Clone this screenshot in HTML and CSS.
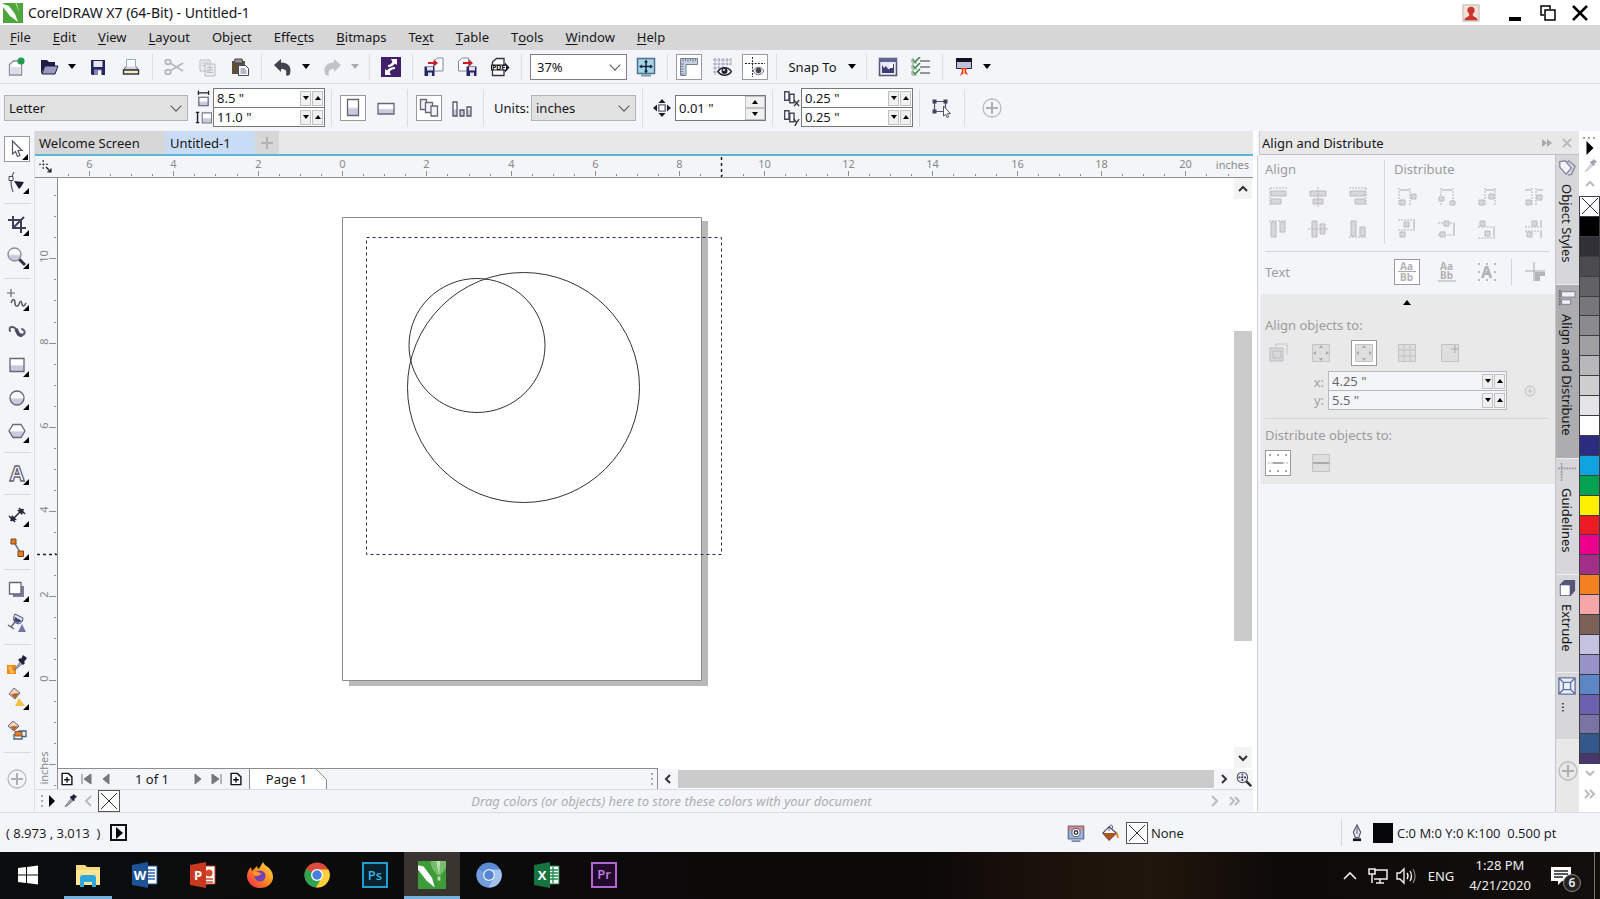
FILE: index.html
```html
<!DOCTYPE html>
<html lang="en">
<head>
<meta charset="utf-8">
<title>CorelDRAW X7 (64-Bit) - Untitled-1</title>
<link rel="stylesheet" href="styles.css">
</head>
<body>
<svg class="paints" aria-hidden="true">
<defs>
<linearGradient id="lav" x1="0" y1="0" x2="0" y2="1"><stop offset=".45" stop-color="#fff"/><stop offset=".6" stop-color="#c9cadd"/></linearGradient>
<linearGradient id="ff" x1="1" y1="0" x2="0" y2="1"><stop offset="0" stop-color="#ffe14a"/><stop offset=".5" stop-color="#ff8a1e"/><stop offset="1" stop-color="#f0204f"/></linearGradient>
</defs>
</svg>
<svg class="sprite" aria-hidden="true">
<symbol id="new" viewBox="0 0 20 20"><path d="M3.500 7.500l4-3.500h8v14h-12z" fill="#fff" stroke="#8b8b9c" stroke-width="1.300"/><path d="M5 10h9v7H5z" fill="#dcdce8"/><circle cx="15" cy="4" r="3.600" fill="#1f9b4b"/></symbol>
<symbol id="open" viewBox="0 0 20 20"><path d="M2 3h6l2 2h6v4H6l-4 8z" fill="#1d1d46"/><path d="M6 9h13l-3 8H3z" fill="#9b9cbd" stroke="#1d1d46"/></symbol>
<symbol id="save" viewBox="0 0 20 20"><path d="M3 3h14v15H4l-1-1z" fill="#26265e"/><path d="M5.500 4h9v6h-9z" fill="#e6e6f0"/><path d="M6 12.500h8V18H6z" fill="#8586ad"/><path d="M10 13.500h3V18h-3z" fill="#fff"/></symbol>
<symbol id="print" viewBox="0 0 20 20"><path d="M5.500 2.500h9V12h-9z" fill="#fff" stroke="#8bb4b4"/><path d="M5 9.500L2.500 13h15L15 9.500" fill="#d5d5df" stroke="#555566"/><path d="M2.500 13h15v4h-15z" fill="#f4f0b5" stroke="#33334a" stroke-width="1.400"/></symbol>
<symbol id="cut" viewBox="0 0 20 20"><g fill="none" stroke="#b9bac0" stroke-width="2"><path d="M6 6l13 8M6 14l13-8"/><ellipse cx="4" cy="5" rx="2.700" ry="2.200"/><ellipse cx="4" cy="15" rx="2.700" ry="2.200"/></g></symbol>
<symbol id="copy" viewBox="0 0 20 20"><path d="M3 3h10v11H3zM8 7h10v12H8z" fill="#ececf0" stroke="#bcbdc3"/><path d="M5 6h6M5 8.500h3M10 10.500h6M10 13h6M10 15.500h6" stroke="#bcbdc3"/></symbol>
<symbol id="paste" viewBox="0 0 20 20"><path d="M2 4h13v13H2z" fill="#5c5137"/><path d="M5 2h7l1 4H4z" fill="#92918f" stroke="#44424c"/><path d="M8.500 8.500h7l3 3v7h-10z" fill="#fff" stroke="#44446b"/><path d="M10.500 12h5M10.500 14h6M10.500 16h6" stroke="#6c6c92"/></symbol>
<symbol id="undo" viewBox="0 0 20 20"><path d="M1 8l7-6v3.500c7 0 11 4 9 11.500-1 2-3 2-4 1 1-4 0-6-5-6V15z" fill="#43434f"/></symbol>
<symbol id="redo" viewBox="0 0 20 20"><path d="M19 8l-7-6v3.500c-7 0-11 4-9 11.500 1 2 3 2 4 1-1-4 0-6 5-6V15z" fill="#c2c3c9"/></symbol>
<symbol id="connect" viewBox="0 0 20 20"><path d="M0 0h20v20H0z" fill="#412069"/><path d="M10 2h6v6l-2-1.500c-1.500 2-4 3.500-7 3.500V8c2 0 3.500-1.500 4.500-3z" fill="#fff"/><path d="M10 18H4v-6l2 1.500c1.500-2 4-3.500 8-3.500v2c-3 0-4.500 1.500-5.500 3z" fill="#fff"/></symbol>
<symbol id="import" viewBox="0 0 20 20"><path d="M9.500 4l4-3h5.500v13h-9.500z" fill="#fff" stroke="#8585a0"/><path d="M0.500 9.500h10v9.500h-10z" fill="#26265e"/><path d="M3 10h6v3.500H3zM4 15.500h4V19H4z" fill="#dfe0f0"/><path d="M4 5h6V2.500l4 3.500-4 3.500V7H4z" fill="#cc1f26"/></symbol>
<symbol id="export" viewBox="0 0 20 20"><path d="M1.500 4l4-3h6v13h-10z" fill="#fff" stroke="#8585a0"/><path d="M9.500 9.500h10v9.500h-10z" fill="#26265e"/><path d="M12 10h6v3.500h-6zM13 15.500h4V19h-4z" fill="#dfe0f0"/><path d="M6 5h6V2.500l4 3.500-4 3.500V7H6z" fill="#cc1f26"/></symbol>
<symbol id="pdf" viewBox="0 0 20 20"><path d="M2.500 18.500V5l4-3.500H14v17z" fill="#fff" stroke="#33333d" stroke-width="1.300"/><path d="M1 7.500h14v-2l4.500 5-4.500 5v-2H1z" fill="#16161e"/><path d="M2 8.500h14v4H2z" fill="#fff"/><text x="2" y="13" font-size="7" font-weight="700" fill="#000">PDF</text></symbol>
<symbol id="fulls" viewBox="0 0 20 20"><path d="M1.500 1.500h17v15h-17z" fill="#a6d5e8" stroke="#4d7187" stroke-width="1.500"/><path d="M5 18.500h10" stroke="#7899a9" stroke-width="2"/><path d="M10 4v11M4.500 9.500h11" stroke="#12233a" stroke-width="1.500"/><path d="M10 2.500l2 3H8zM10 16.500l2-3H8zM3 9.500l3-2v4zM17 9.500l-3-2v4z" fill="#12233a"/></symbol>
<symbol id="rulers" viewBox="0 0 20 20"><path d="M1.500 1.500h17v6H7v11H1.500z" fill="#c7cfdd" stroke="#73819c"/><path d="M4 2v3M6.500 2v2M9 2v3M11.500 2v2M14 2v3M16.500 2v2M2 7h3M2 9.500h2M2 12h3M2 14.500h2M2 17h3" stroke="#5f6f8d" stroke-width=".8"/></symbol>
<symbol id="grid" viewBox="0 0 20 20"><path d="M1 3h18M1 7h18M1 11h9M1 15h6M3 1v17M7 1v16M11 1v9M15 1v8M19 1v8" stroke="#9495b4" stroke-dasharray="2 .6"/><path d="M6 14.500c3-5 10-5 13.500 0-3.500 5-10.500 5-13.500 0z" fill="#fff" stroke="#222234" stroke-width="1.500"/><circle cx="12.500" cy="14" r="3" fill="#222234"/><circle cx="12" cy="13" r="1" fill="#fff"/></symbol>
<symbol id="guides" viewBox="0 0 20 20"><path d="M7.500 0v20M0 6.500h20" stroke="#222" stroke-dasharray="2 1.200"/><path d="M8 14c3-5 8-5 11 0-3 5-8 5-11 0z" fill="#e4e4ea" stroke="#777784"/><circle cx="13.500" cy="13.500" r="2.700" fill="#454552"/></symbol>
<symbol id="options" viewBox="0 0 20 20"><path d="M1.500 1.500h17v17h-17z" fill="#e9eaf5" stroke="#555673" stroke-width="1.500"/><path d="M1 1h18v4H1z" fill="#63648d"/><path d="M4 8v8h12V7h-4v5h-2l-2-3-2 2z" fill="#3f3e78"/><path d="M12 7h3v4h-3z" fill="#fff"/></symbol>
<symbol id="checks" viewBox="0 0 20 20"><path d="M9 4h10M9 10h10M9 16h10" stroke="#77777f" stroke-width="1.500"/><path d="M3 2H1v4h5M3 8H1v4h5M3 14H1v4h5" fill="none" stroke="#8b978b"/><path d="M2 3l2 2 5-5M2 9l2 2 5-5M2 15l2 2 5-5" fill="none" stroke="#30883a" stroke-width="1.500"/></symbol>
<symbol id="launch" viewBox="0 0 20 20"><path d="M2.500 1.500h15v10h-15z" fill="#bfc1dc" stroke="#222238"/><path d="M2 1h16v4H2z" fill="#111122"/><path d="M7 11h6l-1 3 2 4-4-2-4 3 2-5z" fill="#e8342a"/><path d="M9 12h2v4H9z" fill="#ffb84d"/></symbol>
<symbol id="pw" viewBox="0 0 20 20"><path d="M4.500 8.500h11v10h-11z" fill="url(#lav)" stroke="#55556d" stroke-width="1.300"/><path d="M4 1v5M16 1v5M4 3.500h12" stroke="#222" stroke-width="1.500"/></symbol>
<symbol id="ph" viewBox="0 0 20 20"><path d="M8.500 4.500h11v12h-11z" fill="url(#lav)" stroke="#77778f" stroke-width="1.300"/><path d="M3 4v12M1 4h4M1 16h4" stroke="#222" stroke-width="1.700"/></symbol>
<symbol id="portrait" viewBox="0 0 20 20"><path d="M4.500 1.500h11v16h-11z" fill="url(#lav)" stroke="#666675" stroke-width="1.300"/></symbol>
<symbol id="landscape" viewBox="0 0 20 20"><path d="M2 5.500h16v10.500H2z" fill="url(#lav)" stroke="#666675" stroke-width="1.300"/></symbol>
<symbol id="pages" viewBox="0 0 20 20"><g fill="#f3f3f8" stroke="#666675" stroke-width="1.300"><path d="M1.500 1.500h6v10h-6z"/><path d="M6.500 4.500h7v10h-7z"/><path d="M12 8h6.500v10H12z"/></g></symbol>
<symbol id="bars" viewBox="0 0 20 20"><g fill="url(#lav)" stroke="#555566" stroke-width="1.300"><path d="M1 4h4v14H1zM8 12h4v6H8zM15 9h4v9h-4z"/></g></symbol>
<symbol id="nudge" viewBox="0 0 20 20"><path d="M6.500 6.500h7v7h-7z" fill="#fff" stroke="#66667a" stroke-width="1.500"/><path d="M10 0l4 4.500H6zM10 20l4-4.500H6zM0 10l4.500-4v8zM20 10l-4.500-4v8z" fill="#1b1b2a"/></symbol>
<symbol id="dupx" viewBox="0 0 20 20"><path d="M2 2h5v10H2zM8 5h5v10H8z" fill="#fff" stroke="#44445a" stroke-width="1.600"/><path d="M13 12l6 7M19 12l-6 7" stroke="#333" stroke-width="1.600"/></symbol>
<symbol id="dupy" viewBox="0 0 20 20"><path d="M2 2h5v10H2zM8 5h5v10H8z" fill="#fff" stroke="#44445a" stroke-width="1.600"/><path d="M13 12l3 4 3-4M16 16l-2 4" stroke="#333" stroke-width="1.600" fill="none"/></symbol>
<symbol id="treat" viewBox="0 0 20 20"><path d="M3.500 3.500h11v10h-11z" fill="#eeeef6" stroke="#555670" stroke-width="1.200"/><path d="M1.500 1.500h4v4h-4zM12.500 1.500h4v4h-4zM1.500 11.500h4v4h-4z" fill="#44445a"/><path d="M12.500 8v10l2.200-1.700 1.300 3.200 1.700-.700-1.300-3.200h3z" fill="#fff" stroke="#555"/></symbol>
<symbol id="plus" viewBox="0 0 20 20"><circle cx="10" cy="10" r="9" fill="none" stroke="#b9babd" stroke-width="1.300"/><path d="M10 4v12M4 10h12" stroke="#aeafb2" stroke-width="2"/></symbol>
<symbol id="pick" viewBox="0 0 20 20"><path d="M5.500 2v13l3-2.500 2 5 2.500-1-2-5h4z" fill="#fff" stroke="#55556d" stroke-width="1.200"/></symbol>
<symbol id="shape" viewBox="0 0 20 20"><path d="M7 0C3 6 3 12 6 20" fill="none" stroke="#66667a" stroke-width="1.300"/><path d="M2 4.500h4v4H2z" fill="#fff" stroke="#44445a"/><path d="M7 9l10 1-3 5-2 2z" fill="#1c1c35"/></symbol>
<symbol id="crop" viewBox="0 0 20 20"><path d="M6 2v12h13M1 6h13v13M6 14L17 3" fill="none" stroke="#3f3e5b" stroke-width="2"/></symbol>
<symbol id="zoom" viewBox="0 0 20 20"><path d="M12 12l6 6" stroke="#333346" stroke-width="3"/><circle cx="7.500" cy="7.500" r="6.500" fill="url(#lav)" stroke="#8a8a9b" stroke-width="1.300"/></symbol>
<symbol id="free" viewBox="0 0 20 20"><path d="M4 0v8M0 4h8" stroke="#666675" stroke-width="1.200"/><path d="M4 14c2-5 4-4 4 0s3 4 4 1 2-4 3 0 3 1 4-1" fill="none" stroke="#555567" stroke-width="1.500"/></symbol>
<symbol id="art" viewBox="0 0 20 20"><path d="M3 9C1 4 7 4 9 7s2 7 6 6 3-5 0-6" fill="none" stroke="#5a596c" stroke-width="2" stroke-linecap="round"/><path d="M9 7c2 4 2 7 6 6" fill="none" stroke="#4b4a61" stroke-width="3.500"/></symbol>
<symbol id="rect" viewBox="0 0 20 20"><path d="M3 3.500h14v13H3z" fill="url(#lav)" stroke="#66667a" stroke-width="1.300"/></symbol>
<symbol id="ell" viewBox="0 0 20 20"><circle cx="10" cy="10" r="7" fill="url(#lav)" stroke="#66667a" stroke-width="1.300"/></symbol>
<symbol id="poly" viewBox="0 0 20 20"><path d="M6 3.500h8l4 6.500-4 6.500H6L2 10z" fill="url(#lav)" stroke="#66667a" stroke-width="1.300"/></symbol>
<symbol id="texta" viewBox="0 0 20 20"><text x="10" y="17.500" text-anchor="middle" font-size="21" font-weight="700" fill="#fff" stroke="#66667a" stroke-width="1.300">A</text></symbol>
<symbol id="dim" viewBox="0 0 20 20"><path d="M4 16L16 4M2 11l6 6M12 3l6 6" stroke="#27273c" stroke-width="1.500"/><path d="M3 16l2-6 5 5zM17 4l-2 6-5-5z" fill="#27273c"/></symbol>
<symbol id="conn" viewBox="0 0 20 20"><path d="M7 4l7 12" stroke="#77778a" stroke-width="1.500"/><path d="M4 1h5v5H4zM11 13h5.500v5.500H11z" fill="#e27d22" stroke="#80451a"/></symbol>
<symbol id="shadow" viewBox="0 0 20 20"><path d="M6 6h11v11H6z" fill="#7d7e9f"/><path d="M2.500 2.500h11.500v11.500H2.500z" fill="#fff" stroke="#66667a" stroke-width="1.300"/></symbol>
<symbol id="glass" viewBox="0 0 20 20"><path d="M8 1l8 4c0 5-4 7-7 5s-3-5-1-9z" fill="#dbe5f2" stroke="#4a4b6a"/><path d="M8 4l7 4-4 2-4-2z" fill="#404375"/><path d="M8 9l-4 5M1 12l6 4" stroke="#66667a" stroke-width="1.500"/><path d="M15 11l4 8h-8z" fill="#7375a2"/></symbol>
<symbol id="drop" viewBox="0 0 20 20"><path d="M13 5L5 15l-2 3 4-2 9-8z" fill="#a4adba" stroke="#556"/><path d="M15 0l5 4-4 3 1 2-2 1-5-5 1-2 2 0z" fill="#20203c"/></symbol>
<symbol id="cdrop" viewBox="0 0 20 20"><path d="M0 10h9v9H0z" fill="#f08a1e"/><path d="M1 12l3-1 1 4 3 2-4 2z" fill="#ffc04a"/><path d="M14 6l-7 9 1 0 8-7z" fill="#a4adba" stroke="#778"/><path d="M16 0l4 3-3 4 1 1-2 2-5-5 2-2 1 1z" fill="#20203c"/></symbol>
<symbol id="ifill" viewBox="0 0 20 20"><path d="M7 0l6 5-5 6-6-5z" fill="#f1d5bd" stroke="#66667a"/><path d="M4 6l8-1-4 5.500z" fill="#b0622c"/><path d="M12 10l6 8H8z" fill="#f2c14a"/></symbol>
<symbol id="sfill" viewBox="0 0 20 20"><path d="M6 0l6 5-5 5-6-5z" fill="#f1d5bd" stroke="#66667a"/><path d="M3 5.500l8-.5-4 4.500z" fill="#b0622c"/><path d="M8 10.500h7V15H8z" fill="#e27d22" stroke="#8b5a38"/><path d="M11.500 10h7.500v5.500h-4V18H7v-5" fill="none" stroke="#44627e" stroke-width="1.300"/></symbol>
<symbol id="origin" viewBox="0 0 20 20"><path d="M6 0v14M0 6h14" stroke="#222" stroke-width="1.600" stroke-dasharray="3 2"/><path d="M10 10l7 7M17 12v5h-5" fill="none" stroke="#222" stroke-width="2"/></symbol>
<symbol id="addpage" viewBox="0 0 20 20"><path d="M3 2h9l5 5v11H3z" fill="#fff" stroke="#111" stroke-width="2"/><path d="M10 7v8M6 11h8" stroke="#111" stroke-width="2"/></symbol>
<symbol id="target" viewBox="0 0 20 20"><path d="M12 12l7 7" stroke="#333" stroke-width="3"/><circle cx="8" cy="8" r="6.500" fill="#eceef8" stroke="#55556d" stroke-width="1.400"/><path d="M8 3v10M3 8h10" stroke="#44445a" stroke-width="2" stroke-dasharray="2.500 1"/></symbol>
<symbol id="none" viewBox="0 0 20 20"><path d="M0 0h20v20H0z" fill="#fff"/><path d="M2 2l16 16M18 2L2 18" stroke="#333" stroke-width="1"/></symbol>
<symbol id="proof" viewBox="0 0 20 20"><path d="M1.500 2.500h17v14h-17z" fill="#8fb8d8" stroke="#766f8c" stroke-width="1.500"/><path d="M2 3h16v4H2z" fill="#d98888"/><path d="M5 19h10" stroke="#7d86b5" stroke-width="2"/><circle cx="10" cy="9.500" r="4.500" fill="#fff" stroke="#556"/><circle cx="10" cy="9.500" r="2" fill="none" stroke="#334" stroke-width="1.500"/></symbol>
<symbol id="bucket" viewBox="0 0 20 20"><path d="M9 3l8 7-8 8-7-8z" fill="#fff" stroke="#444466" stroke-width="1.300"/><path d="M2 10h15l-8 8z" fill="#b0551a"/><path d="M9 8c-1-8 4-9 4-3" fill="none" stroke="#446"/><path d="M17 8c3 3 3 8 2 8s-3-3-2-8z" fill="#e88a2c"/></symbol>
<symbol id="pen" viewBox="0 0 20 20"><path d="M10 1l4 8-2 6H8L6 9z" fill="#e5e5ee" stroke="#55556d" stroke-width="1.300"/><path d="M10 4v7" stroke="#445"/><path d="M5.500 16h9v3h-9z" fill="#111122"/></symbol>
<symbol id="user" viewBox="0 0 20 20"><path d="M1 1h18v18H1z" fill="#f4ded8" stroke="#b5b0ae"/><circle cx="10" cy="7" r="4" fill="#c8352a"/><path d="M8 9h4v4l5 3v2H3v-2l5-3z" fill="#c8352a"/></symbol>
<symbol id="corel" viewBox="0 0 20 20"><path d="M0 0h20v20H0z" fill="#4fa63c"/><path d="M0 1l6 2 6 8 3 8-8-6-7-9z" fill="#fff"/><path d="M12 0h2l2 9zM18 2l-1 8" fill="#a6d898"/></symbol>
<symbol id="corelb" viewBox="0 0 20 20"><path d="M0 0h20v20H0z" fill="#3e9b3a"/><path d="M9 0h11c1 5-2 8-4 10h-2C12 8 9 5 9 0z" fill="#77bd6c"/><path d="M13 0h3l-1 10z" fill="#b9dfb1"/><path d="M14 11h2v3h-2z" fill="#b9dfb1"/><path d="M0 3l4 1 6 8 2 7-6-5-6-8z" fill="#fff"/></symbol>
<!-- disabled docker icons -->
<symbol id="al" viewBox="0 0 20 20"><path d="M2 1v18M2 1h17" class="dd"/><path d="M3 4h15v5H3zM3 12h10v5H3z" class="df"/></symbol>
<symbol id="ac" viewBox="0 0 20 20"><path d="M2 4h16v5H2zM5 12h10v5H5z" class="df"/><path d="M10 0v20" class="dd"/></symbol>
<symbol id="ar" viewBox="0 0 20 20"><path d="M18 1v18M1 1h17" class="dd"/><path d="M2 4h15v5H2zM7 12h10v5H7z" class="df"/></symbol>
<symbol id="at" viewBox="0 0 20 20"><path d="M1 2h18" class="dd"/><path d="M3 3h5v15H3zM12 3h5v10h-5z" class="df"/></symbol>
<symbol id="am" viewBox="0 0 20 20"><path d="M4 2h5v16H4zM12 5h5v10h-5z" class="df"/><path d="M0 10h20" class="dd"/></symbol>
<symbol id="ab" viewBox="0 0 20 20"><path d="M1 18h18" class="dd"/><path d="M3 2h5v15H3zM12 8h5v9h-5z" class="df"/></symbol>
<symbol id="dh1" viewBox="0 0 20 20"><path d="M2 1v18M13 1v18" class="dd"/><path d="M3 3h9" class="ds"/><path d="M3 13h5v5H3zM14 7h5v5h-5z" class="df"/></symbol>
<symbol id="dh2" viewBox="0 0 20 20"><path d="M4 1v18M16 1v18" class="dd"/><path d="M5 3h10" class="ds"/><path d="M2 10h5v4H2zM13 14h5v4h-5z" class="df"/></symbol>
<symbol id="dh3" viewBox="0 0 20 20"><path d="M8 1v18M18 1v18" class="dd"/><path d="M9 3h9" class="ds"/><path d="M2 13h5v5H2zM12 7h5v5h-5z" class="df"/></symbol>
<symbol id="dh4" viewBox="0 0 20 20"><path d="M8 1v18M12 1v18" class="dd"/><path d="M1 3h6M13 3h6" class="ds"/><path d="M2 13h5v5H2zM13 8h5v5h-5z" class="df"/></symbol>
<symbol id="dv1" viewBox="0 0 20 20"><path d="M1 1h18M1 11h18" class="dd"/><path d="M17 2v8" class="ds"/><path d="M7 3h5v5H7zM3 13h5v5H3z" class="df"/></symbol>
<symbol id="dv2" viewBox="0 0 20 20"><path d="M1 4h18M1 16h18" class="dd"/><path d="M17 5v10" class="ds"/><path d="M7 2h5v5H7zM3 13h5v5H3z" class="df"/></symbol>
<symbol id="dv3" viewBox="0 0 20 20"><path d="M1 8h18M1 19h18" class="dd"/><path d="M17 9v9" class="ds"/><path d="M3 2h5v5H3zM8 12h5v5H8z" class="df"/></symbol>
<symbol id="dv4" viewBox="0 0 20 20"><path d="M1 8h18M1 12h18" class="dd"/><path d="M17 1v6M17 13v6" class="ds"/><path d="M8 2h5v5H8zM3 13h5v5H3z" class="df"/></symbol>
<symbol id="tb1" viewBox="0 0 20 20"><path d="M1 9.500h18" class="ds"/><text x="3" y="8" class="dt">Aa</text><text x="3" y="19" class="dt">Bb</text></symbol>
<symbol id="tb2" viewBox="0 0 20 20"><path d="M1 19h18" class="ds"/><text x="3" y="8" class="dt">Aa</text><text x="3" y="17" class="dt">Bb</text></symbol>
<symbol id="tb3" viewBox="0 0 20 20"><path d="M1 2h18M1 10h18M1 18h18" stroke="#bbb" stroke-width="2" stroke-dasharray="2 6"/><text x="4" y="16" class="dt2">A</text></symbol>
<symbol id="tb4" viewBox="0 0 20 20"><path d="M9 0v19M0 9h20" class="ds"/><path d="M10 10h10v4h-5v5h-5z" fill="#b5b5b8"/></symbol>
<symbol id="o1" viewBox="0 0 20 20"><path d="M2 5h13v13H2zM5 8h8v7H5z" class="df"/><path d="M8 1h11v11M8 1v4" class="dd"/></symbol>
<symbol id="o2" viewBox="0 0 20 20"><path d="M1.500 1.500h17v17h-17z" class="df2"/><path d="M10 2l2 3H8zM10 18l2-3H8zM2 10l3-2v4zM18 10l-3-2v4z" fill="#aaa"/></symbol>
<symbol id="o4" viewBox="0 0 20 20"><path d="M1.500 1.500h17v17h-17zM7 2v16M13 2v16M2 7h16M2 13h16" class="df2"/></symbol>
<symbol id="o5" viewBox="0 0 20 20"><path d="M1.500 1.500h17v17h-17z" class="df2"/><path d="M15 2v8M11 6h8" class="ds"/></symbol>
<symbol id="o6" viewBox="0 0 20 20"><path d="M1 2h18M1 18h18" stroke="#aaa" stroke-width="2" stroke-dasharray="2 6"/><path d="M0 10h20" class="dd"/><path d="M5 10h10" stroke="#aaa" stroke-width="2"/></symbol>
<symbol id="o7" viewBox="0 0 20 20"><path d="M1.500 1.500h17v17h-17z" class="df2"/><path d="M2 10h16" stroke="#aaa" stroke-width="2"/></symbol>
<symbol id="gear" viewBox="0 0 20 20"><circle cx="10" cy="10" r="8" fill="none" stroke="#c5c5c8" stroke-width="2"/><path d="M10 5v10M6 10h8" class="ds"/></symbol>
<symbol id="tagi" viewBox="0 0 20 20"><path d="M9 5l3-3 7 6-4 9-4 1" fill="#d8d9e2" stroke="#8787a0" stroke-width="1.500"/><path d="M2 3l6-1 7 8-6 7-7-8z" fill="#f4f4f8" stroke="#8787a0" stroke-width="1.500"/></symbol>
<symbol id="tali" viewBox="0 0 20 20"><path d="M2 1v18" stroke="#66667a" stroke-width="2" stroke-dasharray="2 1"/><path d="M4 3h15v6H4zM4 12h10v5H4z" fill="#f1f1f6" stroke="#77778c"/></symbol>
<symbol id="tgui" viewBox="0 0 20 20"><path d="M4 0v20M0 6h20" stroke="#9999a8" stroke-width="2" stroke-dasharray="2 1"/></symbol>
<symbol id="text3" viewBox="0 0 20 20"><path d="M2 6l5-5h12v12l-5 6H2z" fill="#55567a"/><path d="M3 7h10v11H3z" fill="#fff"/></symbol>
<symbol id="tbev" viewBox="0 0 20 20"><path d="M1 1h18v18H1zM6 6h8v8H6zM1 1l5 5M19 1l-5 5M1 19l5-5M19 19l-5-5" fill="#e8eefa" stroke="#6372a0" stroke-width="1.500"/></symbol>
</svg>

<header class="titlebar">
  <svg class="i20"><use href="#corel"/></svg>
  <h1>CorelDRAW X7 (64-Bit) - Untitled-1</h1>
  <button class="tbtn user" aria-label="Sign in"><svg class="i18"><use href="#user"/></svg></button>
  <button class="tbtn" aria-label="Minimize"><svg class="i18" viewBox="0 0 18 18"><path d="M3 15h12" stroke="#000" stroke-width="4"/></svg></button>
  <button class="tbtn" aria-label="Restore"><svg class="i18" viewBox="0 0 18 18"><path d="M5 11H2V2h9v3M6 6h10v10H6z" fill="none" stroke="#000" stroke-width="1.500"/></svg></button>
  <button class="tbtn" aria-label="Close"><svg class="i18" viewBox="0 0 18 18"><path d="M2 2l14 14M16 2L2 16" stroke="#000" stroke-width="2.500"/></svg></button>
</header>

<nav class="menu">
  <button><u>F</u>ile</button><button><u>E</u>dit</button><button><u>V</u>iew</button><button><u>L</u>ayout</button><button>Object</button><button>Effe<u>c</u>ts</button><button><u>B</u>itmaps</button><button>Te<u>x</u>t</button><button><u>T</u>able</button><button>T<u>o</u>ols</button><button><u>W</u>indow</button><button><u>H</u>elp</button>
</nav>

<div class="toolbar" role="toolbar" aria-label="Standard">
  <button class="btn" aria-label="New"><svg class="i20"><use href="#new"/></svg></button>
  <button class="btn" aria-label="Open"><svg class="i20"><use href="#open"/></svg></button>
  <button class="drop" aria-label="Recent files"></button>
  <button class="btn" aria-label="Save"><svg class="i20"><use href="#save"/></svg></button>
  <button class="btn" aria-label="Print"><svg class="i20"><use href="#print"/></svg></button>
  <i class="sep"></i>
  <button class="btn" aria-label="Cut"><svg class="i20"><use href="#cut"/></svg></button>
  <button class="btn" aria-label="Copy"><svg class="i20"><use href="#copy"/></svg></button>
  <button class="btn" aria-label="Paste"><svg class="i20"><use href="#paste"/></svg></button>
  <i class="sep"></i>
  <button class="btn" aria-label="Undo"><svg class="i20"><use href="#undo"/></svg></button>
  <button class="drop" aria-label="Undo list"></button>
  <button class="btn" aria-label="Redo"><svg class="i20"><use href="#redo"/></svg></button>
  <button class="drop off" aria-label="Redo list"></button>
  <i class="sep"></i>
  <button class="btn" aria-label="Corel Connect"><svg class="i20"><use href="#connect"/></svg></button>
  <i class="sep"></i>
  <button class="btn" aria-label="Import"><svg class="i20"><use href="#import"/></svg></button>
  <button class="btn" aria-label="Export"><svg class="i20"><use href="#export"/></svg></button>
  <button class="btn" aria-label="Publish to PDF"><svg class="i20"><use href="#pdf"/></svg></button>
  <i class="sep"></i>
  <span class="sel zoomsel"><select aria-label="Zoom level"><option>37%</option></select></span>
  <button class="btn" aria-label="Full screen preview"><svg class="i20"><use href="#fulls"/></svg></button>
  <i class="sep"></i>
  <button class="btn on" aria-label="Show rulers"><svg class="i20"><use href="#rulers"/></svg></button>
  <button class="btn" aria-label="Show grid"><svg class="i20"><use href="#grid"/></svg></button>
  <button class="btn on" aria-label="Show guidelines"><svg class="i20"><use href="#guides"/></svg></button>
  <i class="sep"></i>
  <button class="snap">Snap To<i class="tri"></i></button>
  <i class="sep"></i>
  <button class="btn" aria-label="Welcome screen"><svg class="i20"><use href="#options"/></svg></button>
  <button class="btn" aria-label="Options"><svg class="i20"><use href="#checks"/></svg></button>
  <i class="sep"></i>
  <button class="btn" aria-label="Application launcher"><svg class="i20"><use href="#launch"/></svg></button>
  <button class="drop" aria-label="Launcher list"></button>
</div>

<div class="propbar" role="toolbar" aria-label="Property bar">
  <span class="sel grey paper"><select aria-label="Page size"><option>Letter</option></select></span>
  <span class="icol"><svg class="i18"><use href="#pw"/></svg><svg class="i18"><use href="#ph"/></svg></span>
  <span class="spins">
    <span class="spin"><input type="text" aria-label="Page width" value="8.5 &quot;"><button class="dn" aria-label="Decrease"></button><button class="up" aria-label="Increase"></button></span>
    <span class="spin"><input type="text" aria-label="Page height" value="11.0 &quot;"><button class="dn" aria-label="Decrease"></button><button class="up" aria-label="Increase"></button></span>
  </span>
  <i class="sep wide"></i>
  <button class="btn on" aria-label="Portrait"><svg class="i20"><use href="#portrait"/></svg></button>
  <button class="btn" aria-label="Landscape"><svg class="i20"><use href="#landscape"/></svg></button>
  <i class="sep"></i>
  <button class="btn on" aria-label="All pages"><svg class="i20"><use href="#pages"/></svg></button>
  <button class="btn" aria-label="Current page"><svg class="i20"><use href="#bars"/></svg></button>
  <i class="sep"></i>
  <label class="units" for="units">Units:</label>
  <span class="sel grey unitsel"><select id="units"><option>inches</option></select></span>
  <i class="sep wide"></i>
  <svg class="i18 nudge"><use href="#nudge"/></svg>
  <span class="spin tall"><input type="text" aria-label="Nudge distance" value="0.01 &quot;"><span class="stack"><button class="up" aria-label="Increase"></button><button class="dn" aria-label="Decrease"></button></span></span>
  <i class="sep wide"></i>
  <span class="icol dup"><svg class="i18"><use href="#dupx"/></svg><svg class="i18"><use href="#dupy"/></svg></span>
  <span class="spins">
    <span class="spin"><input type="text" aria-label="Duplicate x" value="0.25 &quot;"><button class="dn" aria-label="Decrease"></button><button class="up" aria-label="Increase"></button></span>
    <span class="spin"><input type="text" aria-label="Duplicate y" value="0.25 &quot;"><button class="dn" aria-label="Decrease"></button><button class="up" aria-label="Increase"></button></span>
  </span>
  <i class="sep wide"></i>
  <button class="btn nb" aria-label="Treat as filled"><svg class="i20"><use href="#treat"/></svg></button>
  <i class="sep wide"></i>
  <button class="btn addp" aria-label="Quick customize"><svg class="i20"><use href="#plus"/></svg></button>
</div>

<main class="work">
  <aside class="toolbox" role="toolbar" aria-label="Toolbox">
    <button class="tool on fly" aria-label="Pick"><svg class="i20"><use href="#pick"/></svg></button>
    <button class="tool fly" aria-label="Shape"><svg class="i20"><use href="#shape"/></svg></button>
    <hr>
    <button class="tool fly" aria-label="Crop"><svg class="i20"><use href="#crop"/></svg></button>
    <button class="tool fly" aria-label="Zoom"><svg class="i20"><use href="#zoom"/></svg></button>
    <hr>
    <button class="tool fly" aria-label="Freehand"><svg class="i20"><use href="#free"/></svg></button>
    <button class="tool" aria-label="Artistic media"><svg class="i20"><use href="#art"/></svg></button>
    <button class="tool fly" aria-label="Rectangle"><svg class="i20"><use href="#rect"/></svg></button>
    <button class="tool fly" aria-label="Ellipse"><svg class="i20"><use href="#ell"/></svg></button>
    <button class="tool fly" aria-label="Polygon"><svg class="i20"><use href="#poly"/></svg></button>
    <hr>
    <button class="tool fly" aria-label="Text"><svg class="i20"><use href="#texta"/></svg></button>
    <hr>
    <button class="tool fly" aria-label="Dimension"><svg class="i20"><use href="#dim"/></svg></button>
    <button class="tool fly" aria-label="Connector"><svg class="i20"><use href="#conn"/></svg></button>
    <hr>
    <button class="tool fly" aria-label="Drop shadow"><svg class="i20"><use href="#shadow"/></svg></button>
    <button class="tool" aria-label="Transparency"><svg class="i20"><use href="#glass"/></svg></button>
    <hr>
    <button class="tool fly" aria-label="Color eyedropper"><svg class="i20"><use href="#cdrop"/></svg></button>
    <button class="tool fly" aria-label="Interactive fill"><svg class="i20"><use href="#ifill"/></svg></button>
    <button class="tool" aria-label="Smart fill"><svg class="i20"><use href="#sfill"/></svg></button>
    <hr>
    <button class="tool last" aria-label="Quick customize"><svg class="i20"><use href="#plus"/></svg></button>
  </aside>

  <section class="doc">
    <div class="tabs">
      <button class="tab wel">Welcome Screen</button><button class="tab cur">Untitled-1</button><button class="tab add" aria-label="New document"><svg class="i14" viewBox="0 0 14 14"><path d="M7 1v12M1 7h12" stroke="#b3b3b3" stroke-width="2"/></svg></button>
    </div>
    <div class="hruler"><span class="corner"><svg class="i14"><use href="#origin"/></svg></span><svg id="hr" class="hsvg"></svg><span class="unit">inches</span></div>
    <div class="mid">
      <div class="vruler"><svg id="vr" class="vsvg"></svg></div>
      <div class="stage">
        <div class="view">
          <svg class="canvas" role="img" aria-label="Drawing page">
            <path d="M291 43h359v465H291z" fill="#b9b9b9"/>
            <path d="M284.500 39.500h359v463h-359z" fill="#fff" stroke="#8a8a8a"/>
            <ellipse cx="465.500" cy="209.500" rx="116" ry="115" class="ink"/>
            <ellipse cx="419" cy="167.500" rx="68" ry="67" class="ink"/>
            <path d="M308.500 59.500h355v317h-355z" class="marquee"/>
          </svg>
          <div class="vscroll"><button aria-label="Scroll up"><svg class="i12" viewBox="0 0 12 12"><path d="M2 8l4-4 4 4" class="chev"/></svg></button><div class="track"><div class="thumb"></div></div><button aria-label="Scroll down"><svg class="i12" viewBox="0 0 12 12"><path d="M2 4l4 4 4-4" class="chev"/></svg></button></div>
        </div>
        <div class="pagenav">
          <div class="pages">
            <button class="slim" aria-label="Add page before"><svg class="i14"><use href="#addpage"/></svg></button>
            <button aria-label="First page"><svg class="i12" viewBox="0 0 12 12"><path d="M2 1v10M11 1v10L4 6z" class="nav"/></svg></button>
            <button aria-label="Previous page"><svg class="i12" viewBox="0 0 12 12"><path d="M9 1v10L3 6z" class="nav"/></svg></button>
            <span class="count">1 of 1</span>
            <button aria-label="Next page"><svg class="i12" viewBox="0 0 12 12"><path d="M3 1v10l6-5z" class="nav"/></svg></button>
            <button class="slim" aria-label="Last page"><svg class="i12" viewBox="0 0 12 12"><path d="M10 1v10M1 1v10l7-5z" class="nav"/></svg></button>
            <button aria-label="Add page after"><svg class="i14"><use href="#addpage"/></svg></button>
            <button class="pagetab"><span>Page 1</span><svg class="slant" viewBox="0 0 12 20"><path d="M1 0l10 10v10H12V0z" fill="#f4f5f9"/><path d="M1 0l10.500 10.500V20" fill="none" stroke="#8d8d90"/></svg></button>
            <i class="grip"></i>
          </div>
          <div class="hscroll"><button aria-label="Scroll left"><svg class="i12" viewBox="0 0 12 12"><path d="M8 2L4 6l4 4" class="chev"/></svg></button><div class="hthumb"></div><button aria-label="Scroll right"><svg class="i12" viewBox="0 0 12 12"><path d="M4 2l4 4-4 4" class="chev"/></svg></button><button aria-label="Navigator"><svg class="i16"><use href="#target"/></svg></button></div>
        </div>
      </div>
    </div>
    <div class="docpal">
      <i class="grip"></i>
      <button aria-label="Palette menu"><svg class="i12" viewBox="0 0 12 12"><path d="M3 0v12l6-6z"/></svg></button>
      <button aria-label="Eyedropper"><svg class="i14"><use href="#drop"/></svg></button>
      <button aria-label="Scroll left"><svg class="i12" viewBox="0 0 12 12"><path d="M9 1L4 6l5 5" class="chev dim"/></svg></button>
      <button class="nocolor" aria-label="No color"><svg class="i20"><use href="#none"/></svg></button>
      <p>Drag colors (or objects) here to store these colors with your document</p>
      <button aria-label="Scroll right"><svg class="i12" viewBox="0 0 12 12"><path d="M3 1l5 5-5 5" class="chev dim"/></svg></button>
      <button aria-label="Expand"><svg class="i12" viewBox="0 0 12 12"><path d="M1 2l4 4-4 4M6 2l4 4-4 4" class="chev dim"/></svg></button>
    </div>
  </section>

  <section class="docker">
    <div class="dhead"><h2>Align and Distribute</h2><button aria-label="Collapse docker"><svg class="i12" viewBox="0 0 12 12"><path d="M1 2v8l5-4zM6 2v8l5-4z" fill="#a9a9a9"/></svg></button><button aria-label="Close docker"><svg class="i12" viewBox="0 0 12 12"><path d="M2 2l8 8M10 2l-8 8" class="chev dim"/></svg></button></div>
    <div class="dbody">
      <div class="panel">
        <div class="two">
          <div class="acol">
            <h3>Align</h3>
            <div class="row"><button aria-label="Align left"><svg class="i20"><use href="#al"/></svg></button><button aria-label="Align center"><svg class="i20"><use href="#ac"/></svg></button><button aria-label="Align right"><svg class="i20"><use href="#ar"/></svg></button></div>
            <div class="row"><button aria-label="Align top"><svg class="i20"><use href="#at"/></svg></button><button aria-label="Align middle"><svg class="i20"><use href="#am"/></svg></button><button aria-label="Align bottom"><svg class="i20"><use href="#ab"/></svg></button></div>
          </div>
          <div class="dcol">
            <h3>Distribute</h3>
            <div class="row"><button aria-label="Distribute left"><svg class="i20"><use href="#dh1"/></svg></button><button aria-label="Distribute centers"><svg class="i20"><use href="#dh2"/></svg></button><button aria-label="Distribute right"><svg class="i20"><use href="#dh3"/></svg></button><button class="far" aria-label="Space horizontally"><svg class="i20"><use href="#dh4"/></svg></button></div>
            <div class="row"><button aria-label="Distribute top"><svg class="i20"><use href="#dv1"/></svg></button><button aria-label="Distribute middles"><svg class="i20"><use href="#dv2"/></svg></button><button aria-label="Distribute bottom"><svg class="i20"><use href="#dv3"/></svg></button><button class="far" aria-label="Space vertically"><svg class="i20"><use href="#dv4"/></svg></button></div>
          </div>
        </div>
        <div class="textrow"><h3>Text</h3><div class="row"><button class="on" aria-label="First line baseline"><svg class="i20"><use href="#tb1"/></svg></button><button aria-label="Last line baseline"><svg class="i20"><use href="#tb2"/></svg></button><button aria-label="Bounding box"><svg class="i20"><use href="#tb3"/></svg></button><button class="far bar" aria-label="Outline"><svg class="i20"><use href="#tb4"/></svg></button></div></div>
        <div class="more">
          <button class="fold" aria-label="Fewer options"><i class="tri upw"></i></button>
          <h3>Align objects to:</h3>
          <div class="row wide"><button aria-label="Active objects"><svg class="i20"><use href="#o1"/></svg></button><button aria-label="Page edge"><svg class="i20"><use href="#o2"/></svg></button><button class="on" aria-label="Page center"><svg class="i20"><use href="#o2"/></svg></button><button aria-label="Grid"><svg class="i20"><use href="#o4"/></svg></button><button aria-label="Specified point"><svg class="i20"><use href="#o5"/></svg></button></div>
          <div class="xy">
            <div class="lab"><label for="px">x:</label><label for="py">y:</label></div>
            <span class="spins">
              <span class="spin"><input id="px" type="text" value="4.25 &quot;"><button class="dn" aria-label="Decrease"></button><button class="up" aria-label="Increase"></button></span>
              <span class="spin"><input id="py" type="text" value="5.5 &quot;"><button class="dn" aria-label="Decrease"></button><button class="up" aria-label="Increase"></button></span>
            </span>
            <svg class="i12"><use href="#gear"/></svg>
          </div>
          <h3 class="line">Distribute objects to:</h3>
          <div class="row wide"><button class="on" aria-label="Extent of selection"><svg class="i20"><use href="#o6"/></svg></button><button aria-label="Extent of page"><svg class="i20"><use href="#o7"/></svg></button></div>
        </div>
      </div>
      <div class="dtabs">
        <button class="t1"><svg class="i18"><use href="#tagi"/></svg><span>Object Styles</span></button>
        <button class="t2"><svg class="i18"><use href="#tali"/></svg><span>Align and Distribute</span></button>
        <button class="t3"><svg class="i18"><use href="#tgui"/></svg><span>Guidelines</span></button>
        <button class="t4"><svg class="i18"><use href="#text3"/></svg><span>Extrude</span></button>
        <button class="t5"><svg class="i18"><use href="#tbev"/></svg><span>...</span></button>
        <button class="t6" aria-label="Quick customize"><svg class="i20"><use href="#plus"/></svg></button>
      </div>
    </div>
  </section>

  <aside class="palette">
    <i class="hgrip"></i>
    <button aria-label="Palette menu"><svg class="i14" viewBox="0 0 12 12"><path d="M3 0v12l6-6z"/></svg></button>
    <button aria-label="Eyedropper"><svg class="i14 faint"><use href="#drop"/></svg></button>
    <button aria-label="Scroll up"><svg class="i12" viewBox="0 0 12 12"><path d="M2 8l4-4 4 4" class="chev dim"/></svg></button>
    <div class="swatches" id="sw"></div>
    <button aria-label="Scroll down"><svg class="i12" viewBox="0 0 12 12"><path d="M2 3l4 4 4-4" class="chev dim"/></svg></button>
    <button aria-label="Expand"><svg class="i12" viewBox="0 0 12 12"><path d="M1 2l4 4-4 4M6 2l4 4-4 4" class="chev dim"/></svg></button>
  </aside>
</main>

<footer class="status">
  <span class="coords">( 8.973 , 3.013&nbsp; )</span>
  <button class="box" aria-label="Status options"><svg class="i12" viewBox="0 0 12 12"><path d="M3 0v12l7-6z"/></svg></button>
  <span class="fill"><svg class="i18"><use href="#proof"/></svg><svg class="i18"><use href="#bucket"/></svg><svg class="i20 bx"><use href="#none"/></svg><b>None</b></span>
  <span class="outline"><svg class="i18"><use href="#pen"/></svg><i class="ksw"></i><b>C:0 M:0 Y:0 K:100&nbsp; 0.500 pt</b></span>
</footer>

<div class="taskbar">
  <button class="app" aria-label="Start"><svg class="i20" viewBox="0 0 20 20"><path d="M0 3l8-1v7.500H0zM9 2l11-1.500v9H9zM0 10.500h8V18l-8-1zM9 10.500h11v9L9 18z" fill="#fff"/></svg></button>
  <button class="app run" aria-label="File Explorer"><svg class="i26" viewBox="0 0 26 26"><path d="M1 3h9l2 2h13v18H1z" fill="#f6da7c"/><path d="M1 8h24v15H1z" fill="#fbe795"/><path d="M5 25v-9c0-2 1-3 3-3h10c2 0 3 1 3 3v9h-4v-5H9v5z" fill="#2fa6dc"/></svg></button>
  <button class="app" aria-label="Word"><svg class="i26" viewBox="0 0 26 26"><path d="M13 4h12v18H13z" fill="#fff" stroke="#1e5296"/><path d="M15 8h8M15 11h8M15 14h8M15 17h8" stroke="#2b66b4" stroke-width="1.500"/><path d="M0 3l16-3v26L0 23z" fill="#1e5296"/><text x="8" y="18" class="app-t">W</text></svg></button>
  <button class="app" aria-label="PowerPoint"><svg class="i26" viewBox="0 0 26 26"><path d="M13 4h12v18H13z" fill="#fff" stroke="#c43a1f"/><circle cx="19" cy="11" r="3.500" fill="#d5492b"/><path d="M16 17h7M16 20h7" stroke="#d5492b" stroke-width="1.500"/><path d="M0 3l16-3v26L0 23z" fill="#c8391f"/><text x="8" y="18" class="app-t">P</text></svg></button>
  <button class="app" aria-label="Firefox"><svg class="i28" viewBox="0 0 28 28"><path d="M14 27C6 27 1 21 1 15c0-4 2-7 4-9l1 4 5-5 1 3c2-1 3-4 5-7 1 3 4 4 6 6 3 3 4 6 4 9 0 6-5 11-13 11z" fill="url(#ff)"/><circle cx="14" cy="15" r="5.500" fill="#7440b5"/><path d="M7 11c4-1 7 1 9 2-2 0-3 2-5 2-3 0-4-2-4-4z" fill="#ff9b24"/></svg></button>
  <button class="app" aria-label="Chrome"><svg class="i26" viewBox="0 0 26 26"><circle cx="13" cy="13" r="12.500" fill="#dd4b3e"/><path d="M13 13L2 7a12.500 12.500 0 0 0 10 18.500l6-9.500z" fill="#2da44f"/><path d="M13 7.500h11.500A12.500 12.500 0 0 1 12 25.500L18.500 14z" fill="#fdd03b"/><circle cx="13" cy="13" r="6" fill="#fff"/><circle cx="13" cy="13" r="4.700" fill="#4a7fe0"/></svg></button>
  <button class="app" aria-label="Photoshop"><svg class="i26" viewBox="0 0 26 26"><path d="M1 1h24v24H1z" fill="#08232f" stroke="#1f9ed0" stroke-width="2"/><text x="13" y="18" class="app-t ps">Ps</text></svg></button>
  <button class="app active" aria-label="CorelDRAW"><svg class="i28"><use href="#corelb"/></svg></button>
  <button class="app" aria-label="Chromium"><svg class="i26" viewBox="0 0 26 26"><circle cx="13" cy="13" r="12.500" fill="#5d8ad4"/><path d="M13 7.500h11.500A12.500 12.500 0 0 1 12 25.500L18.500 14z" fill="#a3c1ee"/><path d="M13 13L2 7a12.500 12.500 0 0 0 10 18.500l5-8z" fill="#719cdf"/><circle cx="13" cy="13" r="6" fill="#e6eefb"/><circle cx="13" cy="13" r="4.700" fill="#5785d2"/></svg></button>
  <button class="app" aria-label="Excel"><svg class="i26" viewBox="0 0 26 26"><path d="M13 4h12v18H13z" fill="#fff" stroke="#14733e"/><path d="M15 8h9M15 11h9M15 14h9M15 17h9M19 5v16" stroke="#1d8a4c" stroke-width="1.300"/><path d="M0 3l16-3v26L0 23z" fill="#14733e"/><text x="8" y="18" class="app-t">X</text></svg></button>
  <button class="app" aria-label="Premiere"><svg class="i26" viewBox="0 0 26 26"><path d="M1 1h24v24H1z" fill="#220a2c" stroke="#b067cf" stroke-width="2"/><text x="13" y="17" class="app-t pr">Pr</text></svg></button>
  <div class="tray">
    <button aria-label="Hidden icons"><svg class="i16" viewBox="0 0 16 16"><path d="M2 11l6-6 6 6" fill="none" stroke="#eee" stroke-width="1.600"/></svg></button>
    <button aria-label="Network"><svg class="i20" viewBox="0 0 20 20"><path d="M6 4h13v9H6M12 13v4M8 17h8M1 3h6v5H1zM4 8v9" fill="none" stroke="#eee" stroke-width="1.500"/></svg></button>
    <button aria-label="Volume"><svg class="i20" viewBox="0 0 20 20"><path d="M1 7h3l4-4v14l-4-4H1z" fill="none" stroke="#eee" stroke-width="1.400"/><path d="M11 7q2 3 0 6M14 5q3 5 0 10" fill="none" stroke="#eee" stroke-width="1.400"/><path d="M17 3q4 7 0 14" fill="none" stroke="#777" stroke-width="1.400"/></svg></button>
    <button class="lang">ENG</button>
    <button class="clock"><span>1:28 PM</span><span>4/21/2020</span></button>
    <button class="notif" aria-label="Notifications"><svg class="i20" viewBox="0 0 20 20"><path d="M0 1h20v14h-9l-4 4v-4H0z" fill="#fff"/><path d="M3 5h14M3 8h14M3 11h9" stroke="#222" stroke-width="1.300"/></svg><span class="badge">6</span></button>
    <i class="peek"></i>
  </div>
</div>
<script src="app.js"></script>
</body>
</html>
```

FILE: styles.css
```css
* { box-sizing: border-box; }
html, body { height: 100%; margin: 0; }
body { display: flex; flex-direction: column; min-height: 100vh; overflow: hidden; background: #f4f5f9; color: #16161a; font: 14px/18px "Noto Sans", "Open Sans", sans-serif; }
button { appearance: none; border: 0; padding: 0; margin: 0; background: none; color: inherit; font: inherit; display: flex; align-items: center; justify-content: center; flex: none; white-space: nowrap; }
input, select { font: inherit; color: inherit; appearance: none; border: 0; border-radius: 0; margin: 0; outline: 0; min-width: 0; }
h1, h2, h3, p, hr { margin: 0; font-size: 14px; font-weight: 400; }
i, b { font-style: normal; font-weight: 400; }
svg { display: block; flex: none; }
.paints { position: absolute; width: 0; height: 0; }
.sprite { display: none; }
.i12 { width: 12px; height: 12px; }
.i14 { width: 14px; height: 14px; }
.i16 { width: 16px; height: 16px; }
.i18 { width: 18px; height: 18px; }
.i20 { width: 20px; height: 20px; }
.i26 { width: 26px; height: 26px; }
.i28 { width: 28px; height: 28px; }

.titlebar { display: flex; align-items: center; flex: 0 0 25px; background: #fff; padding: 0 10px 0 3px; }
.titlebar h1 { flex: 1; margin-left: 5px; }
.tbtn { width: 33px; height: 22px; }
.tbtn.user { margin-right: 11px; }
.tbtn:last-child { width: 20px; margin-left: 6px; }

.menu { display: flex; flex: 0 0 25px; gap: 22px; padding: 0 0 2px 10px; background: #d6d6d6; font-size: 13px; }
.menu u { text-underline-offset: 2px; }

.toolbar { display: flex; align-items: center; flex: 0 0 34px; border-bottom: 1px solid #dedfe3; }
.btn { width: 26px; height: 26px; margin: 0 4px 0 3px; }
.on { background: #fff; border: 1px solid #9a9a9e; }
.sep { flex: none; width: 1px; height: 26px; margin: 0 5px 0 4px; background: #dcdde1; }
.drop { width: 16px; height: 26px; padding-right: 4px; }
.drop::before, .tri, .dn::before, .up::before { content: ""; border: 4px solid transparent; border-top: 5px solid #000; border-bottom: 0; }
.drop.off::before { border-top-color: #aaa; }
.up::before, .tri.upw { border-top: 0; border-bottom: 5px solid #000; }
.snap { width: 80px; height: 26px; gap: 11px; font-size: 13px; }
.sel { position: relative; flex: none; display: flex; height: 26px; }
.sel select { width: 100%; padding: 0 4px; background: #fff; border: 1px solid #808084; font-size: 13px; }
.sel.grey select { background: #e1e1e1; border-color: #b4b4b6; }
.sel::after { content: ""; position: absolute; right: 8px; top: 7px; width: 7px; height: 7px; border: solid #555; border-width: 0 1px 1px 0; transform: rotate(45deg); pointer-events: none; }
.zoomsel { width: 97px; margin: 0 3px; }
.zoomsel select { padding-left: 6px; }

.propbar { display: flex; align-items: center; flex: 0 0 47px; }
.propbar .sep { height: 38px; }
.propbar .sep.wide { margin: 0 5px 0 6px; }
.paper { width: 184px; margin-left: 4px; }
.icol { display: flex; flex-direction: column; gap: 2px; margin: 0 1px 0 7px; }
.icol svg { width: 17px; height: 17px; }
.spins { display: flex; flex-direction: column; width: 112px; border: 1px solid #77777b; background: #fff; flex: none; }
.spin { display: flex; align-items: center; height: 18px; }
.spin + .spin { border-top: 1px solid #77777b; height: 19px; }
.spin input { flex: 1; width: 20px; height: 16px; padding: 0 3px; background: transparent; font-size: 13px; }
.spin button { width: 11px; height: 15px; margin-right: 1px; background: #f0f0f0; border: 1px solid #c2c2c4; }
.dn::before, .up::before { border-left-width: 3px; border-right-width: 3px; }
.dn::before { border-top-width: 4px; }
.up::before { border-bottom-width: 4px; }
.spin.tall { width: 91px; height: 26px; border: 1px solid #77777b; background: #fff; }
.stack { display: flex; flex-direction: column; }
.spin .stack button { width: 20px; height: 12px; margin: 0; }
.units { margin: 0 2px 0 5px; font-size: 13px; width: 35px; white-space: nowrap; }
.unitsel { width: 105px; }
.nudge { margin: 0 4px 0 5px; }
.icol.dup { margin-left: 5px; }
.addp { margin-left: 9px; }

.work { display: flex; flex: 1; min-height: 0; border-bottom: 1px solid #dadbde; }
.toolbox { display: flex; flex-direction: column; align-items: center; flex: 0 0 35px; border-right: 1px solid #dfe0e4; padding-top: 5px; }
.tool { position: relative; width: 26px; height: 26px; margin-bottom: 7px; }
.toolbox hr { width: 27px; height: 1px; border: 0; background: #d9dade; margin: 1px 0 7px; flex: none; }
.fly::after { content: ""; position: absolute; right: 1px; bottom: 1px; width: 6px; height: 6px; background: #000; clip-path: polygon(100% 0, 100% 100%, 0 100%); }
.tool.last { margin-top: 6px; }

.doc { display: flex; flex-direction: column; flex: 1; min-width: 0; }
.tabs { display: flex; flex: 0 0 25px; background: #e8e8e8; border-bottom: 2px solid #5ab7d8; }
.tab { background: #d7d7d7; font-size: 13px; }
.tab.wel { width: 130px; justify-content: flex-start; padding-left: 4px; }
.tab.cur { width: 90px; background: #c8ddf5; justify-content: flex-start; padding-left: 5px; }
.tab.add { width: 24px; }
.hruler { position: relative; display: flex; flex: 0 0 22px; border-bottom: 1px solid #8d8d90; }
.corner { flex: 0 0 22px; display: flex; align-items: center; justify-content: center; background: #f4f5f9; }
.hsvg { flex: 1; width: 20px; height: 21px; }
.unit { position: absolute; right: 4px; top: 0; font-size: 11px; color: #88888c; line-height: 18px; }
.mid { display: flex; flex: 1; min-height: 0; }
.vruler { display: flex; flex: 0 0 23px; border-right: 1px solid #8d8d90; }
.vsvg { width: 22px; height: 100%; }
.lbl { font-size: 11px; fill: #88888c; text-anchor: middle; }
.stage { display: flex; flex-direction: column; flex: 1; min-width: 0; }
.view { display: flex; flex: 1; min-height: 0; background: #fff; }
.canvas { flex: 1; width: 100px; height: 100%; }
.ink { fill: none; stroke: #333; }
.marquee { fill: none; stroke: #25255c; stroke-dasharray: 3 3; }
.vscroll { display: flex; flex-direction: column; flex: 0 0 19px; padding-right: 1px; }
.vscroll button { height: 21px; background: #f3f3f3; }
.track { flex: 1; display: flex; flex-direction: column; padding: 132px 0 106px; }
.thumb { flex: 1; background: #cbcbcb; }
.chev { fill: none; stroke: #333; stroke-width: 2; }
.chev.dim { stroke: #bcbcc0; }
.pagenav { display: flex; flex: 0 0 21px; }
.pages { display: flex; align-items: center; width: 600px; border-top: 1px solid #8d8d90; border-right: 1px solid #8d8d90; }
.pages button { width: 20px; height: 20px; }
.pages .slim { width: 18px; }
.nav { fill: #77777b; stroke: #77777b; }
.count { width: 72px; text-align: center; font-size: 13px; }
.pages .pagetab { position: relative; width: 78px; background: #fff; margin-left: 3px; border-left: 1px solid #8d8d90; padding-right: 4px; font-size: 13px; }
.slant { position: absolute; right: 0; top: 0; width: 12px; height: 20px; }
.grip { width: 2px; height: 13px; background: repeating-linear-gradient(#a9a9ad 0 2px, transparent 2px 5px); flex: none; }
.pages .grip { margin: 0 4px 0 auto; }
.hscroll { display: flex; flex: 1; background: #fff; align-items: center; }
.hscroll button { width: 20px; height: 20px; background: #f6f6f8; }
.hscroll button:last-child { width: 19px; }
.hthumb { flex: 1; height: 18px; background: #cbcbcb; }
.docpal { display: flex; align-items: center; flex: 0 0 22px; border-top: 1px solid #dadbde; padding: 0 8px 0 6px; }
.docpal button { width: 18px; height: 20px; }
.docpal .nocolor { width: 22px; height: 22px; border: 1px solid #555; margin-left: 1px; }
.docpal p { flex: 1; padding-left: 18px; text-align: center; font-size: 13px; font-style: italic; color: #adadb1; }
.docpal p ~ button { width: 20px; }

.docker { display: flex; flex-direction: column; flex: 0 0 325px; border-left: 4px solid #fff; }
.dhead { display: flex; align-items: center; flex: 0 0 24px; margin-left: 2px; background: #e8e8e8; border-bottom: 1px solid #bfbfc2; border-left: 1px solid #d0d0d3; padding: 0 2px; }
.dhead h2 { flex: 1; font-size: 13px; }
.dhead button { width: 20px; height: 20px; }
.dbody { display: flex; flex: 1; min-height: 0; }
.panel { flex: 1; border-left: 1px solid #d0d0d3; padding-left: 3px; min-width: 0; }
.panel h3 { color: #9b9ba0; font-size: 13px; line-height: 18px; }
.two { display: flex; height: 97px; margin: 0 6px 0 4px; padding-top: 5px; border-bottom: 1px solid #d3d4dc; }
.acol { width: 120px; height: 84px; border-right: 1px solid #d9dae0; }
.dcol { padding-left: 9px; flex: 1; }
.row { display: flex; gap: 14px; }
.row button { width: 26px; height: 26px; }
.row .far { margin-left: 7px; }
.row.wide { gap: 17px; margin-top: 6px; }
.two .row { margin-top: 6px; }
.textrow { display: flex; align-items: center; height: 42px; padding: 0 0 2px 4px; }
.textrow h3 { width: 129px; }
.bar { border-left: 1px solid #d3d4dc; }
.row .bar { width: 36px; margin-left: -3px; padding-left: 10px; }
.more { background: #e9e9e9; height: 190px; padding: 0 6px 0 4px; }
.fold { width: 284px; height: 16px; }
.more > h3 { margin-top: 6px; }
.xy { display: flex; align-items: center; margin: 5px 0 8px; gap: 4px; color: #68686c; }
.lab { width: 59px; display: flex; flex-direction: column; align-items: flex-end; font-size: 13px; color: #a2a2a6; }
.xy .spins { flex: 1; background: #f4f5f8; border-color: #b9b9bc; }
.xy .spin + .spin { border-color: #b9b9bc; }
.xy > svg { margin: 0 13px; }
.more > .line { border-top: 1px solid #d6d6d8; padding-top: 7px; margin: 0; }
.dd { fill: none; stroke: #b4b4b8; stroke-dasharray: 2 1; }
.df { fill: #d8d8dc; stroke: #bbbbc0; }
.df2 { fill: #dededf; stroke: #c3c3c6; }
.ds { fill: none; stroke: #a9a9ad; stroke-width: 1px; }
.dt { font-size: 10px; font-weight: 700; fill: #b2b2b6; }
.dt2 { font-size: 16px; font-weight: 700; fill: #b2b2b6; }
.dtabs { display: flex; flex-direction: column; flex: 0 0 24px; background: #e8e8e8; border-left: 1px solid #c6c6c9; font-size: 13px; }
.dtabs button { writing-mode: vertical-rl; justify-content: flex-start; align-items: center; padding: 4px 2px 0 0; gap: 7px; width: 23px; background: #d7d7d9; border-bottom: 1px solid #ececee; }
.t1 { height: 130px; }
.dtabs .t2 { height: 174px; background: #adadaf; }
.t3 { height: 116px; }
.t4 { height: 98px; }
.t5 { height: 67px; }
.dtabs .t6 { height: 62px; background: none; justify-content: center; border: 0; padding: 0; }

.palette { display: flex; flex-direction: column; align-items: center; flex: 0 0 21px; background: #fff; }
.hgrip { width: 13px; height: 2px; margin-top: 6px; background: repeating-linear-gradient(90deg, #a9a9ad 0 2px, transparent 2px 5px); flex: none; }
.palette button { width: 20px; height: 18px; }
.faint { opacity: .4; }
.swatches { display: flex; flex-direction: column; flex: 1; min-height: 0; width: 21px; margin-top: 3px; }
.swatches button { flex: 2 1 0; width: 21px; height: auto; min-height: 0; border: 1px solid #3c3c48; border-bottom: 0; overflow: hidden; }
.swatches button:last-child { flex-grow: 1; }
.palette > button:nth-last-child(2) { height: 20px; }
.palette > button:last-child { height: 20px; margin-bottom: 8px; }

.status { display: flex; align-items: center; flex: 0 0 39px; font: 13px/18px "Open Sans", "Noto Sans", sans-serif; padding: 0 43px 0 6px; }
.coords { width: 104px; white-space: nowrap; }
.box { width: 17px; height: 17px; border: 2px solid #111; }
.fill { display: flex; align-items: center; margin-left: auto; width: 274px; }
.fill svg + svg { margin-left: 16px; }
.fill .bx { margin: 0 4px 0 8px; outline: 1px solid #555; }
.fill svg.bx { margin-left: 8px; }
.outline { display: flex; align-items: center; width: 216px; height: 27px; border-left: 1px solid #d6d7db; padding-left: 6px; white-space: nowrap; }
.ksw { width: 20px; height: 20px; background: #060608; margin: 0 4px 0 7px; flex: none; }

.taskbar { display: flex; flex: 0 0 47px; background: linear-gradient(90deg, #0b0d0e 0, #0c0909 45%, #0c0909 58%, #1d120b 66%, #21160c 72%, #0d0a09 80%, #120e0b 100%); color: #eee; }
.app { flex: none; width: 48px; height: 47px; margin: 0 5px 0 4px; padding-bottom: 2px; }
.app:nth-child(3n) { margin-right: 6px; }
.app:first-child { margin-right: 8px; }
.app.run { box-shadow: inset 0 -3px #76b0dc; }
.app.active { width: 56px; margin: 0 1px 0 0; background: #3a3431; box-shadow: inset 0 -3px #76b0dc; }
.app-t { font: 700 13px "Open Sans", sans-serif; fill: #fff; text-anchor: middle; }
.ps { fill: #35b5e6; font-weight: 600; }
.pr { fill: #c77fe2; font-weight: 600; }
.tray { display: flex; align-items: center; margin-left: auto; font-size: 13px; }
.tray button { height: 47px; width: 28px; }
.tray .lang { width: 42px; }
.tray .clock { width: 76px; flex-direction: column; line-height: 20px; padding-bottom: 2px; }
.tray .notif { width: 56px; position: relative; padding-right: 10px; }
.badge { position: absolute; left: 25px; top: 22px; width: 18px; height: 18px; border-radius: 9px; background: #26231f; border: 1px solid #888; font-size: 12px; line-height: 16px; font-weight: 600; }
.peek { width: 6px; height: 47px; border-left: 1px solid #77736d; }
```

FILE: app.js
```js
const NS = "http://www.w3.org/2000/svg";
const INCH = 42.17;

function add(parent, name, attrs, text) {
  const el = document.createElementNS(NS, name);
  for (const key in attrs) el.setAttribute(key, attrs[key]);
  if (text !== undefined) el.textContent = text;
  parent.append(el);
}

// Horizontal ruler: zero sits at the page's left edge.
const h = document.getElementById("hr");
const hZero = 286;
for (let n = -13; n <= 42; n++) {
  const x = Math.round(hZero + n * INCH / 2) - 0.5;
  if (x < 0) continue;
  const major = n % 4 === 0;
  add(h, "path", { d: `M${x} ${major ? 15 : 18}v${major ? 5 : 2}`, stroke: "#8d8d92" });
  if (major) add(h, "text", { x, y: 12, class: "lbl" }, Math.abs(n / 2));
}
add(h, "path", { d: "M664.500 1v20", stroke: "#222", "stroke-width": 1.5, "stroke-dasharray": "3 3" });

// Vertical ruler: zero sits at the page's bottom edge.
const v = document.getElementById("vr");
const vZero = 502;
for (let n = -5; n <= 23; n++) {
  const y = Math.round(vZero - n * INCH / 2) + 0.5;
  const major = n % 4 === 0;
  add(v, "path", { d: `M${major ? 14 : 19} ${y}h${major ? 7 : 2}`, stroke: "#8d8d92" });
  if (major && n >= 0) add(v, "text", { x: 0, y: 0, transform: `translate(13 ${y - 2}) rotate(-90)`, class: "lbl" }, n / 2);
}
add(v, "text", { x: 0, y: 0, transform: "translate(13 590) rotate(-90)", class: "lbl" }, "inches");
add(v, "path", { d: "M2 376.500h20", stroke: "#222", "stroke-width": 1.5, "stroke-dasharray": "3 3" });

// Default CMYK palette, top to bottom.
const colors = ["none", "#000000", "#302f33", "#4b4b4e", "#626265", "#77777a", "#8b8b8e", "#a0a0a3", "#b8b8ba", "#cececf", "#e4e4e6", "#ffffff", "#2b2c80", "#0fa3df", "#04a14e", "#fff000", "#ec1c24", "#eb008b", "#a33088", "#f58020", "#f7a6a8", "#7b6156", "#c5c2df", "#9792c8", "#5d86c5", "#6a60ae", "#7a74a4", "#35588a", "#46386b"];
const box = document.getElementById("sw");
for (const c of colors) {
  const b = document.createElement("button");
  b.setAttribute("aria-label", c);
  if (c === "none") b.innerHTML = '<svg class="i20"><use href="#none"/></svg>';
  else b.style.background = c;
  box.append(b);
}
```
